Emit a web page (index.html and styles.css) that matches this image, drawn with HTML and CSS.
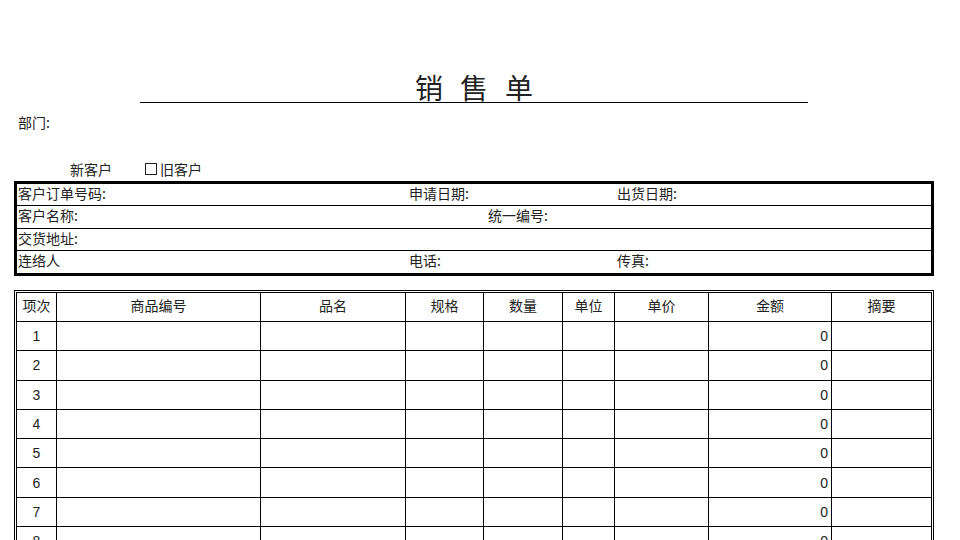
FILE: index.html
```html
<!DOCTYPE html>
<html lang="zh-CN">
<head>
<meta charset="utf-8">
<title>销售单</title>
<link rel="stylesheet" href="styles.css">
</head>
<body>
<div class="page">
  <div class="title-wrap"><h1 class="title">销售单</h1></div>
  <div class="dept">部门:</div>
  <div class="cust-type">
    <span class="opt">新客户</span>
    <span class="opt opt-old"><span class="check"></span>旧客户</span>
  </div>
  <div class="info">
    <div class="info-row r1">
      <span class="c-a">客户订单号码:</span>
      <span class="c-b">申请日期:</span>
      <span class="c-d">出货日期:</span>
    </div>
    <div class="info-row r2">
      <span class="c-ab">客户名称:</span>
      <span class="c-cd">统一编号:</span>
    </div>
    <div class="info-row r3">
      <span class="c-a">交货地址:</span>
    </div>
    <div class="info-row r4">
      <span class="c-a">连络人</span>
      <span class="c-b">电话:</span>
      <span class="c-d">传真:</span>
    </div>
  </div>
  <table class="items">
    <colgroup>
      <col class="w1"><col class="w2"><col class="w3"><col class="w4"><col class="w5"><col class="w6"><col class="w7"><col class="w8"><col class="w9">
    </colgroup>
    <thead>
      <tr><th>项次</th><th>商品编号</th><th>品名</th><th>规格</th><th>数量</th><th>单位</th><th>单价</th><th>金额</th><th>摘要</th></tr>
    </thead>
    <tbody>
      <tr><td class="num">1</td><td></td><td></td><td></td><td></td><td></td><td></td><td class="amt">0</td><td></td></tr>
      <tr><td class="num">2</td><td></td><td></td><td></td><td></td><td></td><td></td><td class="amt">0</td><td></td></tr>
      <tr><td class="num">3</td><td></td><td></td><td></td><td></td><td></td><td></td><td class="amt">0</td><td></td></tr>
      <tr><td class="num">4</td><td></td><td></td><td></td><td></td><td></td><td></td><td class="amt">0</td><td></td></tr>
      <tr><td class="num">5</td><td></td><td></td><td></td><td></td><td></td><td></td><td class="amt">0</td><td></td></tr>
      <tr><td class="num">6</td><td></td><td></td><td></td><td></td><td></td><td></td><td class="amt">0</td><td></td></tr>
      <tr><td class="num">7</td><td></td><td></td><td></td><td></td><td></td><td></td><td class="amt">0</td><td></td></tr>
      <tr><td class="num">8</td><td></td><td></td><td></td><td></td><td></td><td></td><td class="amt">0</td><td></td></tr>
    </tbody>
  </table>
</div>
</body>
</html>
```
FILE: styles.css
```css
html, body {
  margin: 0;
  padding: 0;
  background: #fff;
}
body {
  font-family: "Noto Sans CJK SC", "Liberation Sans", sans-serif;
  font-size: 14px;
  color: #222;
  overflow: hidden;
}
.page {
  width: 920px;
  padding-left: 14px;
}
.title-wrap {
  padding-top: 73px;
}
.title {
  margin: 0 126px;
  height: 29px;
  line-height: 29px;
  border-bottom: 1px solid #000;
  text-align: center;
  font-size: 28px;
  font-weight: normal;
  letter-spacing: 17px;
  text-indent: 17px;
  color: #222;
}
.dept {
  margin-top: 11px;
  padding-left: 4px;
  line-height: 16px;
}
.cust-type {
  margin-top: 31px;
  padding-left: 56px;
  line-height: 16px;
  display: flex;
  align-items: center;
}
.opt-old {
  margin-left: 33px;
  display: inline-flex;
  align-items: center;
}
.check {
  display: inline-block;
  width: 10px;
  height: 10px;
  border: 1px solid #222;
  margin-right: 3px;
}
.info {
  margin-top: 4px;
  border: 3px solid #000;
}
.info-row {
  display: grid;
  grid-template-columns: 391px 79px 129px 1fr;
  height: 21px;
  line-height: 18px;
  padding-left: 1px;
  border-bottom: 1px solid #000;
}
.info-row.r2 {
  height: 22px;
  line-height: 19px;
}
.info-row.r4 {
  height: 22px;
  line-height: 19px;
  border-bottom: none;
}
.c-a { grid-column: 1; }
.c-b { grid-column: 2 / 4; }
.c-d { grid-column: 4; }
.c-ab { grid-column: 1 / 3; }
.c-cd { grid-column: 3 / 5; }
.items {
  margin-top: 14px;
  width: 920px;
  table-layout: fixed;
  border-collapse: separate;
  border-spacing: 0;
  border: 3px double #000;
}
.w1 { width: 40px; }
.w2 { width: 204px; }
.w3 { width: 145px; }
.w4 { width: 78px; }
.w5 { width: 79px; }
.w6 { width: 52px; }
.w7 { width: 94px; }
.w8 { width: 123px; }
.w9 { width: 99px; }
.items th,
.items td {
  border-right: 1px solid #000;
  border-bottom: 1px solid #000;
  padding: 0;
  font-weight: normal;
  text-align: center;
}
.items th:last-child,
.items td:last-child {
  border-right: none;
}
.items th {
  height: 28px;
  vertical-align: top;
  line-height: 24px;
}
.items td {
  height: 28.3px;
  line-height: 16px;
}
.items td.num {
  font-family: "Liberation Sans", sans-serif;
  font-size: 14px;
}
.items td.amt {
  font-family: "Liberation Sans", sans-serif;
  font-size: 14px;
  text-align: right;
  padding-right: 3px;
}
```
